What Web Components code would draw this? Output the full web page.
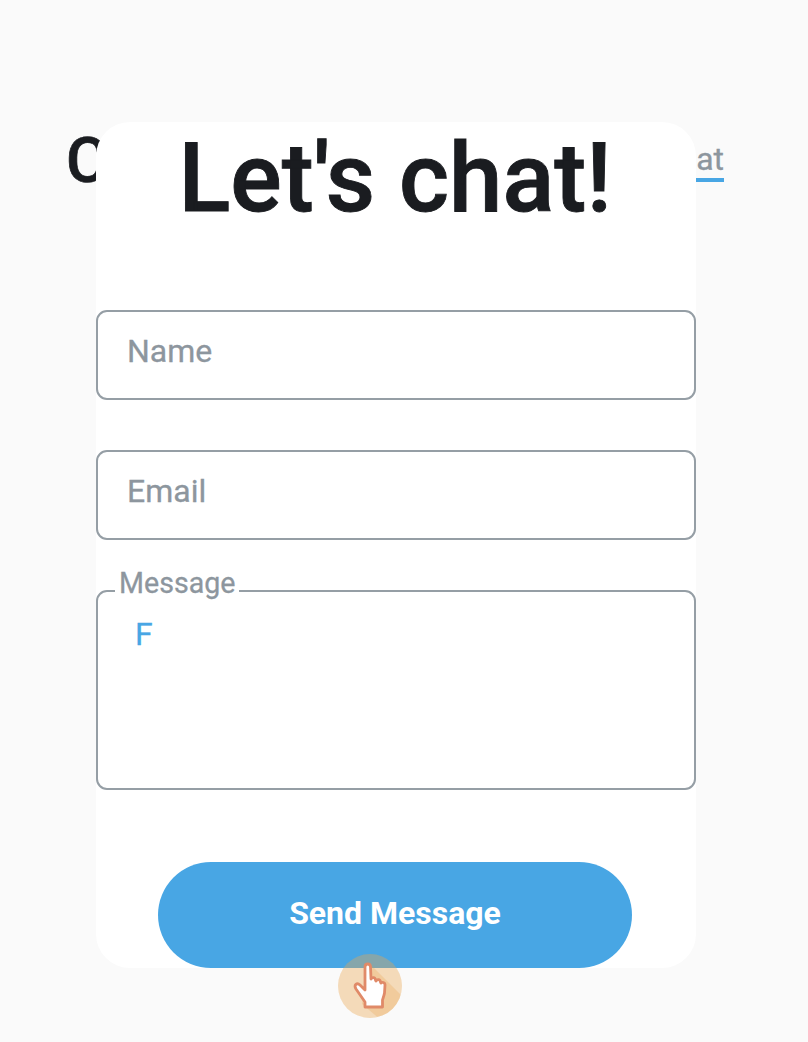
<!DOCTYPE html>
<html>
<head>
<meta charset="utf-8">
<style>
  html, body { margin: 0; height: 100%; background: #fafafa; overflow: hidden; }
</style>
</head>
<body>
<chat-page>
  <chat-modal>
    <chat-field>Name</chat-field>
    <chat-field>Email</chat-field>
    <chat-field label="Message" tall>F</chat-field>
    <send-button>Send Message</send-button>
  </chat-modal>
  <tap-cursor></tap-cursor>
</chat-page>

<script>
class ChatPage extends HTMLElement {
  constructor() {
    super();
    this.attachShadow({ mode: 'open' }).innerHTML = `
    <style>
      :host {
        display: block;
        position: relative;
        height: 1042px;
        font-family: Roboto, "Liberation Sans", sans-serif;
        background: #fafafa;
      }
      header {
        display: flex;
        justify-content: space-between;
        align-items: flex-start;
        padding: 124px 84px 0 66px;
      }
      .logo {
        font-size: 63px;
        line-height: 74px;
        font-weight: 500;
        color: #1a1c20;
        -webkit-text-stroke: .7px #1a1c20;
      }
      .link {
        font-size: 32px;
        line-height: 38px;
        margin-top: 16px;
        color: #8d969e;
        border-bottom: 4px solid #48a6e4;
        -webkit-text-stroke: .3px #8d969e;
      }
    </style>
    <header>
      <span class="logo">C</span>
      <span class="link">at</span>
    </header>
    <slot></slot>`;
  }
}

class ChatModal extends HTMLElement {
  constructor() {
    super();
    this.attachShadow({ mode: 'open' }).innerHTML = `
    <style>
      :host {
        display: flex;
        flex-direction: column;
        gap: 50px;
        box-sizing: border-box;
        position: absolute;
        left: 96px;
        top: 122px;
        width: 600px;
        height: 846px;
        background: #fff;
        border-radius: 34px;
      }
      h1 {
        margin: 0 0 20px;
        padding-right: 2px;
        height: 118px;
        font-size: 96px;
        line-height: 112px;
        font-weight: 500;
        text-align: center;
        color: #1a1c20;
        -webkit-text-stroke: .9px #1a1c20;
      }
    </style>
    <h1>Let's chat!</h1>
    <slot></slot>`;
  }
}

class ChatField extends HTMLElement {
  constructor() {
    super();
    const label = this.getAttribute('label');
    this.attachShadow({ mode: 'open' }).innerHTML = `
    <style>
      :host {
        display: block;
        position: relative;
        box-sizing: border-box;
        height: 90px;
        border: 2px solid #959ea5;
        border-radius: 11px;
        padding: 17px 29px;
        font-size: 32px;
        line-height: 44px;
        color: #8d969e;
        -webkit-text-stroke: .3px currentColor;
      }
      :host([tall]) {
        height: 200px;
        padding: 20px 37px;
        color: #48a6e4;
      }
      label {
        position: absolute;
        left: 17px;
        top: -26px;
        padding: 0 4px;
        background: #fff;
        font-size: 28.6px;
        line-height: 34px;
        color: #8d969e;
      }
    </style>
    ${label ? `<label>${label}</label>` : ''}
    <slot></slot>`;
  }
}

class SendButton extends HTMLElement {
  constructor() {
    super();
    this.attachShadow({ mode: 'open' }).innerHTML = `
    <style>
      :host {
        display: flex;
        align-items: center;
        justify-content: center;
        box-sizing: border-box;
        width: 474px;
        height: 106px;
        margin: 22px 0 0 62px;
        padding-bottom: 4px;
        border-radius: 53px;
        background: #48a6e4;
        color: #fff;
        font-size: 32px;
        font-weight: 700;
      }
    </style>
    <slot></slot>`;
  }
}

class TapCursor extends HTMLElement {
  constructor() {
    super();
    this.attachShadow({ mode: 'open' }).innerHTML = `
    <style>
      :host {
        display: block;
        position: absolute;
        left: 338px;
        top: 954px;
        width: 64px;
        height: 64px;
      }
      svg { display: block; }
      .hand { filter: blur(.6px); }
    </style>
    <svg width="64" height="64" viewBox="0 0 64 64">
      <defs><clipPath id="c"><circle cx="32" cy="32" r="32"/></clipPath></defs>
      <circle cx="32" cy="32" r="32" fill="#e9a550" fill-opacity=".38"/>
      <path d="M32 10 L72 50 L50 72 L24 50 Z" fill="#e8a048" fill-opacity=".25" clip-path="url(#c)"/>
      <path class="hand" d="M27 13 C27 9 32.500 9 32.500 13 L33 25 C34 23 37 23 37.500 26 L38 27 C39 25 42 25 42.500 28 L43 29 C44 28 47 28 47 31 L46.500 39 C46 42 45 44 44.500 46 L44.500 53 L27 53 L27 48 L18 35 C15.500 31 19 28 22 31 L27 36 Z"
        fill="#fff" stroke="#e08a68" stroke-width="2.800" stroke-linejoin="round"/>
    </svg>`;
  }
}

customElements.define('chat-page', ChatPage);
customElements.define('chat-modal', ChatModal);
customElements.define('chat-field', ChatField);
customElements.define('send-button', SendButton);
customElements.define('tap-cursor', TapCursor);
</script>
</body>
</html>
